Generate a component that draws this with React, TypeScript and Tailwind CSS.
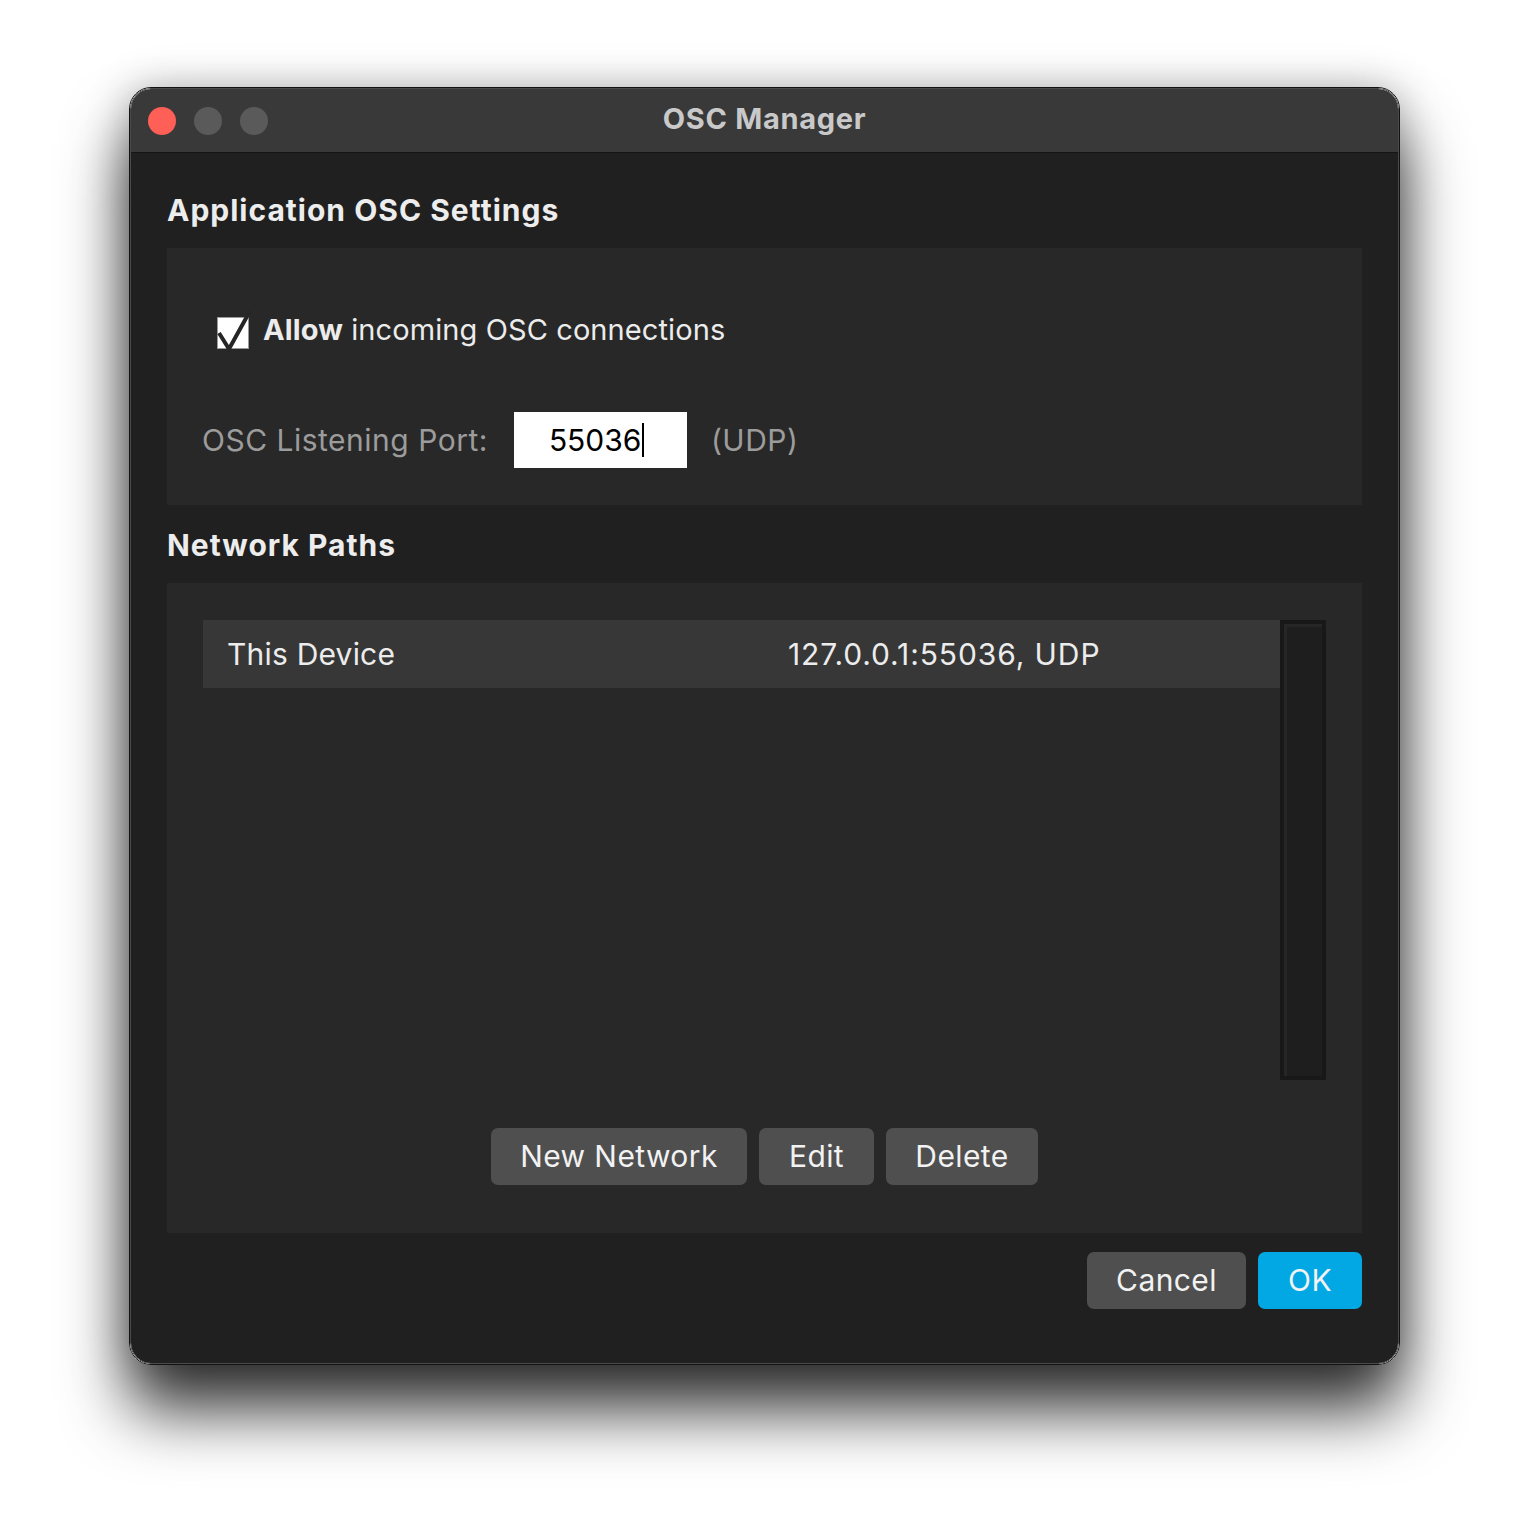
import React from 'react';

const font = { fontFamily: 'Inter, "Noto Sans", sans-serif' };

const Checkbox: React.FC = () => (
  <svg width="40" height="44" viewBox="0 0 40 44" className="shrink-0">
    <rect x="4.5" y="9.5" width="31" height="31" fill="#ffffff" stroke="#9a9a9a" strokeWidth="1" />
    <path d="M6 25 L16 41 L37 3" fill="none" stroke="#262626" strokeWidth="4" strokeLinejoin="miter" />
  </svg>
);

const Button: React.FC<{ label: string; w: string; primary?: boolean }> = ({ label, w, primary }) => (
  <button
    className={`${w} h-[57px] rounded-[7px] text-[30px] tracking-[0.4px] text-[#f2f2f2] flex items-center justify-center ${
      primary ? 'bg-[#02a8e3]' : 'bg-[#4f4f4f]'
    }`}
  >
    {label}
  </button>
);

const App: React.FC = () => {
  return (
    <div className="min-h-screen bg-white pt-[87px] pl-[129px]" style={font}>
      <div className="w-[1271px] h-[1278px] rounded-[22px] border border-[#121212] overflow-hidden shadow-[0_45px_65px_rgba(0,0,0,0.8),0_0_40px_rgba(0,0,0,0.25)]">
        <div className="h-full rounded-[21px] border border-[#4a4a4a] overflow-hidden flex flex-col">
          {/* Title bar */}
          <div className="h-[64px] shrink-0 bg-[#393939] border-b border-[#151515] grid grid-cols-[1fr_auto_1fr] items-center">
            <div className="flex items-center gap-[18px] pl-[17px]">
              <span className="w-[28px] h-[28px] rounded-full bg-[#fe5f57]" />
              <span className="w-[28px] h-[28px] rounded-full bg-[#5a5a5a]" />
              <span className="w-[28px] h-[28px] rounded-full bg-[#5a5a5a]" />
            </div>
            <div className="text-[29px] font-bold text-[#c9c9c9] tracking-[0.7px] -mt-[3px]">OSC Manager</div>
            <div />
          </div>

          {/* Body */}
          <div className="flex-1 bg-[#202020] px-[36px] pt-[37px] flex flex-col">
            <h2 className="h-[40px] leading-[40px] text-[30px] font-bold text-[#ededed] tracking-[1px] mb-[18px]">
              Application OSC Settings
            </h2>

            <div className="h-[257px] bg-[#282828] pl-[46px] pt-[60px] flex flex-col">
              <div className="h-[44px] flex items-center gap-[10px]">
                <Checkbox />
                <span className="text-[29px] text-[#ececec] tracking-[0.1px]">
                  <span className="font-bold">Allow</span> incoming OSC connections
                </span>
              </div>
              <div className="mt-[60px] h-[56px] flex items-center">
                <span className="text-[30px] text-[#9c9c9c] tracking-[0.5px] -ml-[11px]">OSC Listening Port:</span>
                <div className="ml-[26px] w-[173px] h-[56px] bg-white flex items-center pl-[35px]">
                  <span className="text-[30px] text-black">55036</span>
                  <span className="w-[2px] h-[34px] bg-black ml-[1px]" />
                </div>
                <span className="ml-[24px] text-[30px] text-[#9c9c9c] tracking-[0.5px]">(UDP)</span>
              </div>
            </div>

            <h2 className="h-[40px] leading-[40px] text-[30px] font-bold text-[#ededed] tracking-[1px] mt-[20px] mb-[18px]">
              Network Paths
            </h2>

            <div className="h-[650px] bg-[#282828] px-[36px] pt-[37px] flex flex-col">
              <div className="h-[460px] flex">
                <div className="flex-1">
                  <div className="h-[68px] bg-[#373737] flex items-center text-[30px] text-[#ececec]">
                    <span className="pl-[24px] w-[585px] tracking-[0.2px]">This Device</span>
                    <span className="tracking-[0.9px]">127.0.0.1:55036, UDP</span>
                  </div>
                </div>
                <div className="w-[46px] bg-[#181818] p-[4px]">
                  <div className="h-full bg-[#1e1e1e] border-l-[3px] border-t-[3px] border-[#262626]" />
                </div>
              </div>
              <div className="mt-[48px] flex justify-center gap-[12px]">
                <Button label="New Network" w="w-[256px]" />
                <Button label="Edit" w="w-[115px]" />
                <Button label="Delete" w="w-[152px]" />
              </div>
            </div>

            <div className="mt-[19px] flex justify-end gap-[12px]">
              <Button label="Cancel" w="w-[159px]" />
              <Button label="OK" w="w-[104px]" primary />
            </div>
          </div>
        </div>
      </div>
    </div>
  );
};

export default App;
